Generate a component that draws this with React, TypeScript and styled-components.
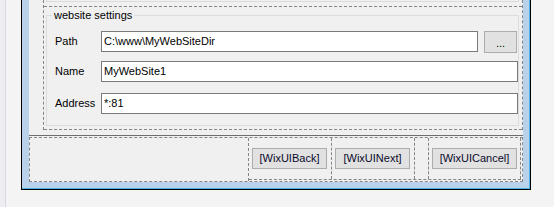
import styled, { createGlobalStyle } from "styled-components";

const GlobalStyle = createGlobalStyle`
  html, body {
    margin: 0;
    padding: 0;
    background: #f4f4f4;
  }
  body {
    font-family: "Liberation Sans", Arial, sans-serif;
    font-size: 11px;
    color: #000;
  }
`;

const dash = "#858585";

const Page = styled.div`
  display: flex;
  align-items: flex-start;
  height: 207px;
  overflow: hidden;
  background: #f4f4f4;
`;

const LeftStrip = styled.div`
  width: 5px;
  height: 100%;
  background: #eeeef2;
  border-right: 1px solid #d8d8e4;
  margin-right: 15px;
  flex-shrink: 0;
`;

const Window = styled.div`
  width: 494px;
  border: 1px solid #000;
  border-top: none;
  padding: 0 7px 7px 7px;
  background: #b9d1ea;
  box-shadow: inset -1px -1px 0 #49b5e6;
  flex-shrink: 0;
`;

const Content = styled.div`
  background: #f0f0f0;
  display: flex;
  flex-direction: column;
`;

const TopArea = styled.div`
  display: flex;
  padding-left: 14px;
`;

const DashedColumn = styled.div`
  flex: 1;
  border-left: 1px dashed ${dash};
  border-right: 1px dashed ${dash};
  display: flex;
  flex-direction: column;
`;

const PrevGroupTail = styled.div`
  height: 1px;
  margin: 0 3px 4px 2px;
  border: 1px solid #dcdcdc;
  border-top: none;
`;

const SettingsCell = styled.div`
  border-top: 1px dashed ${dash};
  border-bottom: 1px dashed ${dash};
  padding: 1px 3px 3px 2px;
`;

const Group = styled.fieldset`
  margin: 0;
  padding: 0 0 11px 8px;
  border: 1px solid #dcdcdc;
  display: flex;
  flex-direction: column;
  min-width: 0;
`;

const Legend = styled.legend`
  margin-left: -3px;
  padding: 0 2px;
  line-height: 14px;
  font-size: 11px;
`;

const FieldRow = styled.div<{ $top: number }>`
  display: flex;
  align-items: flex-start;
  margin-top: ${(p) => p.$top}px;
`;

const Label = styled.div`
  width: 46px;
  height: 21px;
  line-height: 21px;
  flex-shrink: 0;
`;

const TextBox = styled.div`
  flex: 1;
  height: 19px;
  line-height: 19px;
  border: 1px solid #7a7a7a;
  background: #fff;
  padding-left: 2px;
  white-space: nowrap;
  overflow: hidden;
`;

const BrowseButton = styled.div`
  width: 31px;
  height: 20px;
  margin: 0 1px 0 6px;
  border: 1px solid #adadad;
  background: #e1e1e1;
  text-align: center;
  line-height: 22px;
  flex-shrink: 0;
`;

const BottomBar = styled.div`
  margin-top: 5px;
  border-top: 1px solid #6e6e6e;
  padding-top: 1px;
`;

const ButtonPanel = styled.div`
  height: 43px;
  border: 1px dashed ${dash};
  display: flex;
  align-items: flex-start;
`;

const EmptyCell = styled.div`
  flex: 1;
  height: 100%;
  border-right: 1px dashed ${dash};
`;

const ButtonTable = styled.div`
  display: flex;
  height: 41px;
  margin-right: 1px;
  border-bottom: 1px dashed ${dash};
`;

const Cell = styled.div<{ $width: number; $boxed?: boolean }>`
  width: ${(p) => p.$width}px;
  box-sizing: border-box;
  display: flex;
  align-items: center;
  padding-left: 3px;
  border-right: ${(p) => (p.$width > 13 ? `1px dashed ${dash}` : "none")};
  border-left: ${(p) => (p.$boxed ? `1px dashed ${dash}` : "none")};
`;

const WizardButton = styled.div<{ $width: number }>`
  width: ${(p) => p.$width}px;
  height: 21px;
  box-sizing: border-box;
  border: 1px solid #adadad;
  background: #e1e1e1;
  text-align: center;
  line-height: 19px;
  color: #0a0a2a;
`;

export default function App() {
  return (
    <>
      <GlobalStyle />
      <Page>
        <LeftStrip />
        <Window>
          <Content>
            <TopArea>
              <DashedColumn>
                <PrevGroupTail />
                <SettingsCell>
                  <Group>
                    <Legend>website settings</Legend>
                    <FieldRow $top={9}>
                      <Label>Path</Label>
                      <TextBox>C:\www\MyWebSiteDir</TextBox>
                      <BrowseButton>...</BrowseButton>
                    </FieldRow>
                    <FieldRow $top={8}>
                      <Label>Name</Label>
                      <TextBox>MyWebSite1</TextBox>
                    </FieldRow>
                    <FieldRow $top={11}>
                      <Label>Address</Label>
                      <TextBox>*:81</TextBox>
                    </FieldRow>
                  </Group>
                </SettingsCell>
              </DashedColumn>
            </TopArea>
            <BottomBar>
              <ButtonPanel>
                <EmptyCell />
                <ButtonTable>
                  <Cell $width={83}>
                    <WizardButton $width={75}>[WixUIBack]</WizardButton>
                  </Cell>
                  <Cell $width={83}>
                    <WizardButton $width={75}>[WixUINext]</WizardButton>
                  </Cell>
                  <Cell $width={13} />
                  <Cell $width={93} $boxed>
                    <WizardButton $width={85}>[WixUICancel]</WizardButton>
                  </Cell>
                </ButtonTable>
              </ButtonPanel>
            </BottomBar>
          </Content>
        </Window>
      </Page>
    </>
  );
}
